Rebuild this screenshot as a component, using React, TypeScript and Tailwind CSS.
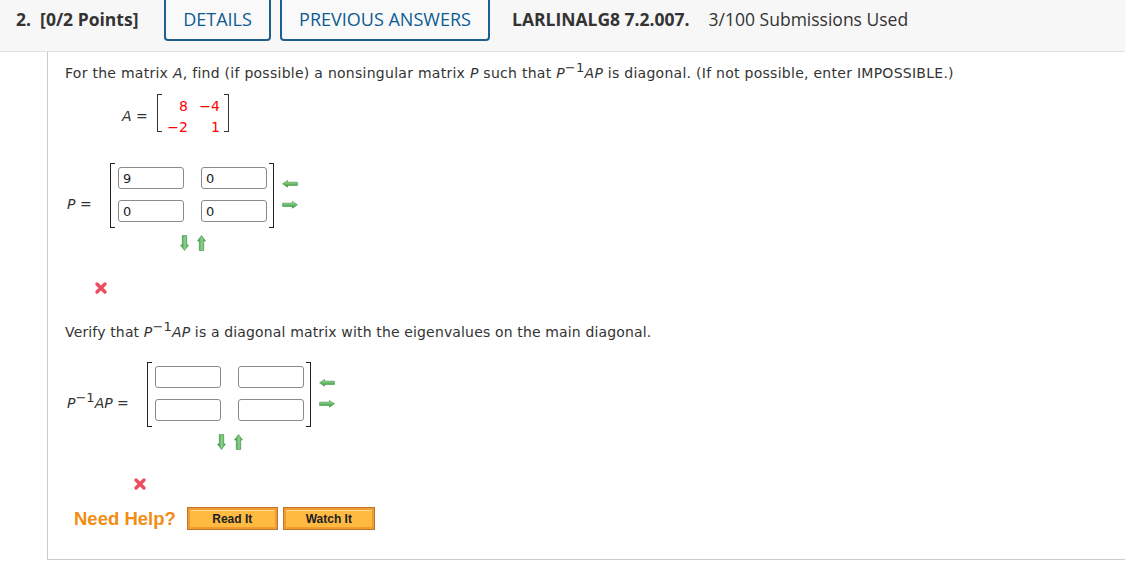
import React from "react";

function HArrow({ dir, id }: { dir: "left" | "right"; id: string }) {
  const d =
    dir === "left"
      ? "M0.6 3.8 L5.6 0.4 V2.2 H15.4 V5.4 H5.6 V7.2 Z"
      : "M15.4 3.8 L10.4 0.4 V2.2 H0.6 V5.4 H10.4 V7.2 Z";
  return (
    <svg width="16" height="8" viewBox="0 0 16 8">
      <defs>
        <linearGradient id={id} x1="0" y1="0" x2="0" y2="1">
          <stop offset="0" stopColor="#b3e4ad" />
          <stop offset="0.5" stopColor="#6cc06c" />
          <stop offset="1" stopColor="#2f8a36" />
        </linearGradient>
      </defs>
      <path d={d} fill={`url(#${id})`} stroke="#3f8f44" strokeWidth="0.6" />
    </svg>
  );
}

function VArrow({ dir, id }: { dir: "up" | "down"; id: string }) {
  const d =
    dir === "down"
      ? "M2.3 0.5 H6.7 V10 H8.5 L4.5 15.5 L0.5 10 H2.3 Z"
      : "M2.3 15.5 H6.7 V6 H8.5 L4.5 0.5 L0.5 6 H2.3 Z";
  return (
    <svg width="9" height="16" viewBox="0 0 9 16">
      <defs>
        <linearGradient id={id} x1="0" y1="0" x2="1" y2="0">
          <stop offset="0" stopColor="#2e8a35" />
          <stop offset="0.55" stopColor="#8fd38f" />
          <stop offset="1" stopColor="#3f9a44" />
        </linearGradient>
      </defs>
      <path d={d} fill={`url(#${id})`} stroke="#3f8f44" strokeWidth="0.6" />
    </svg>
  );
}

function RedX() {
  return (
    <svg width="14" height="14" viewBox="0 0 14 14">
      <path d="M3 3 L11 11 M11 3 L3 11" stroke="#ee4c5c" strokeWidth="3.4" strokeLinecap="round" />
    </svg>
  );
}

function Cell({ value }: { value?: string }) {
  return (
    <input
      type="text"
      readOnly
      defaultValue={value ?? ""}
      className="w-[66px] h-[22px] border border-[#8a8a8a] rounded-[3px] bg-white pl-[4px] text-[13px] leading-[20px] text-[#222] font-['DejaVu_Sans',sans-serif] outline-none"
    />
  );
}

function InputMatrix({ values, prefix }: { values: string[]; prefix: string }) {
  return (
    <div className="flex flex-col">
      <div className="flex items-start">
        <div className="w-[5px] h-[65px] border-l border-y border-[#222]" />
        <div className="grid grid-cols-[66px_66px] gap-x-[17px] gap-y-[11px] pt-[4px] pl-[3px] pr-[2px]">
          {values.map((v, i) => (
            <Cell key={i} value={v} />
          ))}
        </div>
        <div className="w-[5px] h-[65px] border-r border-y border-[#222]" />
        <div className="flex flex-col gap-[13px] pt-[17px] ml-[8px]">
          <HArrow dir="left" id={`${prefix}-l`} />
          <HArrow dir="right" id={`${prefix}-r`} />
        </div>
      </div>
      <div className="flex gap-[8px] mt-[7px] ml-[70px]">
        <VArrow dir="down" id={`${prefix}-d`} />
        <VArrow dir="up" id={`${prefix}-u`} />
      </div>
    </div>
  );
}

function HelpButton({ label, w }: { label: string; w: string }) {
  return (
    <button className={`${w} h-[23px] border border-[#b9772e] bg-[#f39b30] p-[2px]`}>
      <span className="flex h-full items-center justify-center bg-[#ffba42] border-t border-[#ffd98f] rounded-[1px] text-[12px] font-bold text-[#222] font-['Liberation_Sans',Arial,sans-serif]">
        {label}
      </span>
    </button>
  );
}

export default function App() {
  return (
    <div className="w-[1125px] h-[565px] bg-white overflow-hidden">
      {/* Question header */}
      <div className="h-[52px] bg-[#f7f7f7] border-b border-[#e3e3e3] flex items-start pl-[16px] font-['Open_Sans',sans-serif] text-[17.5px] text-[#333]">
        <span className="w-[148px] pt-[7px] leading-[24px] font-bold">2.&nbsp; [0/2 Points]</span>
        <button className="-mt-[3px] w-[107px] h-[44px] pt-[1px] border-2 border-[#1f5f8e] rounded-b-[4px] text-[18px] text-[#0d5b91] bg-[#f9f9f9]">
          DETAILS
        </button>
        <button className="-mt-[3px] ml-[9px] w-[210px] h-[44px] pt-[1px] border-2 border-[#1f5f8e] rounded-b-[4px] text-[18px] text-[#0d5b91] bg-[#f9f9f9]">
          PREVIOUS ANSWERS
        </button>
        <span className="ml-[22px] pt-[7px] leading-[24px] font-bold">LARLINALG8 7.2.007.</span>
        <span className="ml-[19px] pt-[7px] leading-[24px]">3/100 Submissions Used</span>
      </div>

      {/* Question body */}
      <div className="ml-[47px] h-[508px] border-l border-b border-[#cccccc] pl-[17px] pt-[13px] font-['DejaVu_Sans',Verdana,sans-serif] text-[14px] leading-[17px] text-[#333]">
        <p className="tracking-[0.27px]">
          For the matrix <i>A</i>, find (if possible) a nonsingular matrix <i>P</i> such that <i>P</i>
          <sup className="text-[13px]">−1</sup>
          <i>AP</i> is diagonal. (If not possible, enter IMPOSSIBLE.)
        </p>

        <div className="flex items-start mt-[12px] ml-[57px] h-[38px]">
          <span className="w-[35px] mt-[14px]">
            <i>A</i> =
          </span>
          <div className="w-[5px] h-[38px] border-l border-y border-[#333]" />
          <div className="grid grid-cols-[26px_32px] pr-[4px] pt-[2px] leading-[21px] text-right text-[#f00]">
            <span>8</span>
            <span>−4</span>
            <span>−2</span>
            <span>1</span>
          </div>
          <div className="w-[5px] h-[38px] border-r border-y border-[#333]" />
        </div>

        <div className="flex items-start mt-[31px] ml-[2px]">
          <span className="w-[43px] pt-[33px]">
            <i>P</i> =
          </span>
          <InputMatrix values={["9", "0", "0", "0"]} prefix="p" />
        </div>

        <div className="mt-[30px] ml-[29px]">
          <RedX />
        </div>

        <p className="mt-[29px] tracking-[0.15px]">
          Verify that <i>P</i>
          <sup className="text-[13px]">−1</sup>
          <i>AP</i> is a diagonal matrix with the eigenvalues on the main diagonal.
        </p>

        <div className="flex items-start mt-[21px] ml-[2px]">
          <span className="w-[80px] pt-[33px]">
            <i>P</i>
            <sup className="text-[13px]">−1</sup>
            <i>AP</i> =
          </span>
          <InputMatrix values={["", "", "", ""]} prefix="q" />
        </div>

        <div className="mt-[27px] ml-[68px]">
          <RedX />
        </div>

        <div className="flex items-center mt-[16px] ml-[9px]">
          <span className="text-[18.5px] font-bold text-[#f28c12] font-['Liberation_Sans',Arial,sans-serif] mr-[11px]">
            Need Help?
          </span>
          <HelpButton label="Read It" w="w-[91px]" />
          <span className="w-[5px]" />
          <HelpButton label="Watch It" w="w-[92px]" />
        </div>
      </div>
    </div>
  );
}
